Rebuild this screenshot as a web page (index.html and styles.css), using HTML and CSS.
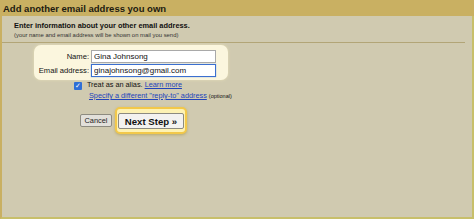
FILE: index.html
```html
<!DOCTYPE html>
<html lang="en">
<head>
    <meta charset="UTF-8">
    <title>Add another email address</title>
    <link rel="stylesheet" href="styles.css">
</head>
<body>
    <div class="titlebar">Add another email address you own</div>
    <div class="panel">
        <div class="intro">
            <h2>Enter information about your other email address.</h2>
            <p>(your name and email address will be shown on mail you send)</p>
        </div>
        <div class="rule"></div>

        <div class="fields">
            <label>Name:</label>
            <input type="text" class="field" value="Gina Johnsong">
            <label>Email address:</label>
            <input type="text" class="field focus" value="ginajohnsong@gmail.com">
        </div>

        <div class="options">
            <div class="alias">
                <span class="check">&#10003;</span>
                Treat as an alias. <a href="#">Learn more</a>
            </div>
            <div class="replyto">
                <a href="#">Specify a different "reply-to" address</a> <small>(optional)</small>
            </div>
        </div>

        <div class="actions">
            <button class="cancel">Cancel</button>
            <div class="glow"><button class="next">Next Step &raquo;</button></div>
        </div>
    </div>
</body>
</html>
```

FILE: styles.css
```css
body {
    margin: 0;
    background-color: #d0cab0;
    font-family: "Liberation Sans", Arial, sans-serif;
    color: #111;
    width: 474px;
    height: 219px;
    overflow: hidden;
}

.titlebar {
    background-color: #c9b062;
    height: 16px;
    padding-left: 3px;
    font-size: 9.5px;
    font-weight: bold;
    line-height: 17px;
    color: #1c1a10;
}

.panel {
    height: 201px;
    border-left: 2px solid #c9b062;
    border-right: 2px solid #c8bf6a;
    border-bottom: 2px solid #c8bf6a;
    background-color: #d0cab0;
}

.intro {
    padding: 4px 0 0 12px;
}
.intro h2 {
    margin: 0;
    font-size: 7.4px;
    line-height: 12px;
}
.intro p {
    margin: 0;
    font-size: 5.9px;
    line-height: 6px;
    color: #333;
}

.rule {
    height: 1px;
    background-color: #b2a577;
    margin: 4px 7px 0 0;
}

.fields {
    width: 180px;
    margin: 2px 0 0 32px;
    padding: 5px 12px 3px 2px;
    background-color: #fbf6de;
    border-radius: 7px;
    box-shadow: 0 0 3px #e8e0b8;
    display: grid;
    grid-template-columns: 53px 125px;
    column-gap: 2px;
    row-gap: 1px;
    align-items: center;
}
.fields label {
    text-align: right;
    font-size: 7.6px;
    white-space: nowrap;
}
.field {
    box-sizing: border-box;
    height: 13px;
    width: 125px;
    border: 1px solid #a9a9a9;
    font-family: "Liberation Sans", Arial, sans-serif;
    font-size: 8px;
    padding: 0 2px;
    margin: 0;
    color: #111;
    background: #fff;
}
.field.focus {
    border: 1px solid #3b6fd0;
    box-shadow: 0 0 1px #6f9ae8;
}

.options {
    margin: -1px 0 0 72px;
    font-size: 7.3px;
    line-height: 11px;
}
.options a {
    color: #2244bb;
}
.check {
    display: inline-block;
    width: 8px;
    height: 8px;
    background-color: #2f6fd6;
    color: #fff;
    font-size: 7px;
    line-height: 8px;
    text-align: center;
    border-radius: 1px;
    margin-right: 3px;
    vertical-align: -1px;
}
.replyto {
    padding-left: 15px;
}
.replyto small {
    font-size: 5.5px;
}

.actions {
    display: flex;
    align-items: center;
    gap: 3px;
    margin: 5px 0 0 78px;
}
.cancel {
    height: 13px;
    width: 32px;
    padding: 0;
    font-family: "Liberation Sans", Arial, sans-serif;
    font-size: 7.4px;
    background: #e2e0da;
    border: 1px solid #8d8b80;
    border-radius: 2px;
    color: #222;
}
.glow {
    padding: 4px 1px 3px;
    background-color: #fdf2b4;
    border: 2px solid #f2c84a;
    border-radius: 5px;
    box-shadow: 0 1px 3px #b8aa6c;
}
.next {
    display: block;
    height: 16px;
    width: 66px;
    padding: 0;
    font-family: "Liberation Sans", Arial, sans-serif;
    font-size: 9.6px;
    font-weight: bold;
    background: #f3f2f0;
    border: 1px solid #8c8a80;
    border-radius: 2px;
    color: #111;
}
```
